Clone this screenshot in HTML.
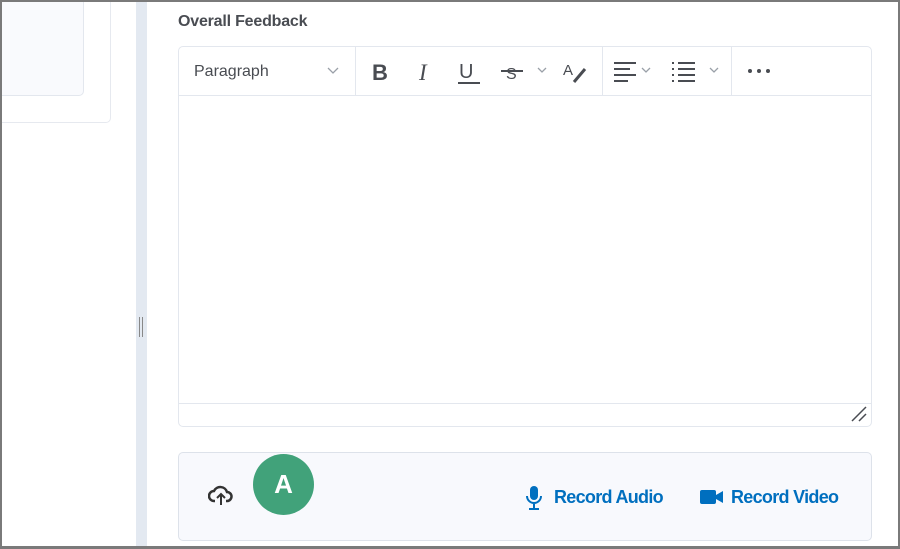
<html><head><style>
body{margin:0;width:900px;height:549px;overflow:hidden;background:#fff;font-family:"Liberation Sans",sans-serif;position:relative}
.frame{position:absolute;inset:0;border:2px solid #7a7a7a;border-bottom-width:3px;box-sizing:border-box;pointer-events:none;z-index:9}
.abs{position:absolute}
</style></head><body>
<div class="frame"></div>
<div class="abs" style="left:-10px;top:-10px;width:92px;height:104px;border:1px solid #e3e7ee;border-radius:5px;background:#f9fafd"></div>
<div class="abs" style="left:-10px;top:-10px;width:119px;height:131px;border:1px solid #e6e9ef;border-radius:5px"></div>
<div class="abs" style="left:136px;top:0;width:11px;height:549px;background:#e3e9f1"></div>
<div class="abs" style="left:139px;top:317px;width:1px;height:20px;background:#888"></div>
<div class="abs" style="left:142px;top:317px;width:1px;height:20px;background:#888"></div>
<div class="abs" style="left:178px;top:13px;font-size:16px;font-weight:bold;color:#494c52;letter-spacing:-0.2px">Overall Feedback</div>
<div class="abs" style="left:178px;top:46px;width:692px;height:379px;border:1px solid #e3e7ee;border-radius:5px"></div>
<div class="abs" style="left:179px;top:95px;width:692px;height:1px;background:#e3e7ee"></div>
<div class="abs" style="left:179px;top:403px;width:692px;height:1px;background:#e3e7ee"></div>
<div class="abs" style="left:355px;top:47px;width:1px;height:48px;background:#e3e7ee"></div>
<div class="abs" style="left:602px;top:47px;width:1px;height:48px;background:#e3e7ee"></div>
<div class="abs" style="left:731px;top:47px;width:1px;height:48px;background:#e3e7ee"></div>
<div class="abs" style="left:194px;top:63px;font-size:16px;color:#494c52">Paragraph</div>
<svg class="abs" style="left:0;top:0" width="900" height="549" fill="none" stroke="#494c52">
<path d="M328 68l5 5 5-5M538 68l4 4 4-4M642 68l4 4 4-4M710 68l4 4 4-4" stroke="#9aa0a8" stroke-width="1.3"/>
<text x="372" y="80" font-family="Liberation Sans" font-weight="bold" font-size="22" fill="#494c52" stroke="none">B</text>
<text x="419" y="80" font-family="Liberation Serif" font-style="italic" font-size="23" fill="#494c52" stroke="none">I</text>
<text x="459" y="78" font-family="Liberation Sans" font-size="20" fill="#494c52" stroke="none">U</text>
<path d="M458 83h22" stroke-width="2"/>
<text x="506" y="79" font-family="Liberation Sans" font-size="16" fill="#494c52" stroke="none">S</text>
<path d="M501 71h22" stroke-width="2"/>
<text x="563" y="75" font-family="Liberation Sans" font-size="15" fill="#494c52" stroke="none">A</text>
<path d="M574 82l11-13" stroke-width="3"/>
<path d="M614 63h22M614 69h16M614 75h22M614 81h14" stroke-width="2"/>
<path d="M672 63h2M678 63h17M672 69h2M678 69h17M672 75h2M678 75h17M672 81h2M678 81h17" stroke-width="2"/>
<circle cx="750" cy="71" r="2" fill="#494c52" stroke="none"/><circle cx="759" cy="71" r="2" fill="#494c52" stroke="none"/><circle cx="768" cy="71" r="2" fill="#494c52" stroke="none"/>
<path d="M852 421l14-14M859 421l7-7" stroke-width="1.5"/>
</svg>
<div class="abs" style="left:178px;top:452px;width:692px;height:87px;border:1px solid #dde2ea;border-radius:5px;background:#f8f9fd"></div>
<svg class="abs" style="left:208px;top:484px" width="26" height="22" viewBox="0 0 26 22"><path d="M7 17H6a5 5 0 0 1 0-10 7 7 0 0 1 13 1 4.5 4.5 0 0 1 0 9h-1" fill="none" stroke="#333" stroke-width="2.5"/><path d="M13 21V10M9 14l4-4 4 4" fill="none" stroke="#333" stroke-width="2"/></svg>
<div class="abs" style="left:253px;top:454px;width:61px;height:61px;border-radius:50%;background:#41a27a;color:#fff;font-size:26px;font-weight:bold;text-align:center;line-height:61px">A</div>
<svg class="abs" style="left:524px;top:485px" width="20" height="26" viewBox="0 0 20 26"><rect x="6" y="1" width="8" height="14" rx="4" fill="#006fbf"/><path d="M3 11a7 7 0 0 0 14 0M10 18v5M5 24h10" fill="none" stroke="#006fbf" stroke-width="2"/></svg>
<div class="abs" style="left:554px;top:487px;font-size:18px;font-weight:bold;color:#006fbf;letter-spacing:-0.7px">Record Audio</div>
<svg class="abs" style="left:700px;top:490px" width="24" height="14" viewBox="0 0 24 14"><rect x="0" y="0" width="16" height="14" rx="2" fill="#006fbf"/><path d="M16 5l7-4v12l-7-4z" fill="#006fbf"/></svg>
<div class="abs" style="left:731px;top:487px;font-size:18px;font-weight:bold;color:#006fbf;letter-spacing:-0.7px">Record Video</div>
</body></html>
